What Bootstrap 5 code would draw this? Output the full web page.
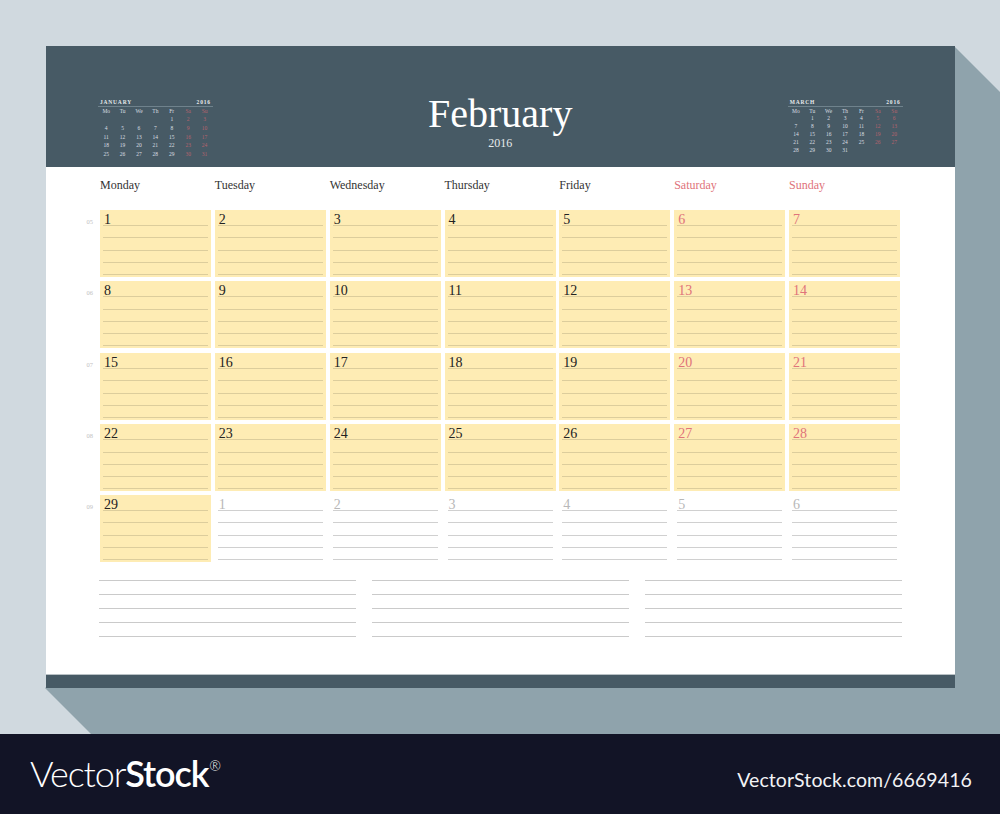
<!DOCTYPE html>
<html lang="en">
<head>
<meta charset="utf-8">
<title>February 2016 calendar</title>
<link rel="stylesheet" href="https://cdn.jsdelivr.net/npm/bootstrap@5.3.0/dist/css/bootstrap.min.css">
<style>
html,body{margin:0;height:814px;overflow:hidden;background:#d0d9df;}
body{font-family:"Liberation Serif",serif;color:#2b2b2b;}
.stage{position:relative;height:734px;padding-top:46px;padding-left:45.5px;}
.cast{position:absolute;left:0;top:0;}
.sheet{position:relative;width:909px;height:642px;background:#fff;}
.sheet-head{height:121px;background:#475a65;padding:53px 52px 0 52.5px;color:#d9dfe2;}
.title-block{margin-top:-7px;}
.month-name{font-size:40px;line-height:44px;color:#fff;}
.year-name{font-size:12px;line-height:14px;color:#e6eaec;}
.mini{width:114.8px;font-size:5.5px;line-height:8px;}
.mini-top{height:6.5px;line-height:7.5px;padding:0 2px;border-bottom:1px solid #6f828c;font-weight:700;letter-spacing:.8px;color:#e6eaec;box-sizing:content-box;}
.mini-grid{display:grid;grid-template-columns:repeat(7,16.4px);text-align:center;}
.mini-jan{grid-auto-rows:8.7px;}
.mini-mar{grid-auto-rows:7.85px;}
.mini-grid .we{color:#b5636e;}
.sheet-body{height:506.5px;padding:0 0 0 36px;}
.month-grid{display:grid;grid-template-columns:14.7px repeat(7,111px);grid-template-rows:38.7px;column-gap:3.83px;row-gap:4.3px;grid-auto-rows:67px;}
.week-row{grid-column:1/-1;display:grid;grid-template-columns:14.7px repeat(7,111px);column-gap:3.83px;padding-top:11px;font-size:12px;line-height:14px;color:#333;}
.week-row .we{color:#e0737a;}
.wk{font-size:6.5px;color:#c2c2c2;line-height:8px;padding-top:8px;padding-left:5px;}
.day{background:#feecb4;padding:4px 3px 0;font-size:14px;line-height:12px;color:#222;}
.rules{height:61.25px;padding-left:1px;background:repeating-linear-gradient(to bottom,transparent 0,transparent 11.25px,#dccd9c 11.25px,#dccd9c 12.25px);}
.day.we{color:#e0737a;}
.day.off{background:transparent;color:#b8b8b8;}
.day.off .rules{background:repeating-linear-gradient(to bottom,transparent 0,transparent 11.25px,#d0d0d0 11.25px,#d0d0d0 12.25px);}
.notes{margin-top:17.5px;padding-left:17.5px;gap:16.5px;}
.note-col{width:256.5px;height:58px;background:repeating-linear-gradient(to bottom,#cacaca 0,#cacaca 1px,transparent 1px,transparent 14px);}
.sheet-foot{height:14.5px;background:#475a65;border-top:1px solid #b9c1c5;}
.brand-bar{height:80px;background:#121426;color:#fff;padding:0 28px 0 30px;font-family:Lato,sans-serif;}
.logo{font-size:36px;line-height:36px;letter-spacing:-1.1px;white-space:nowrap;margin-top:-2px;}
.logo-light{font-weight:300;}
.logo-bold{font-weight:600;}
.logo-reg{font-size:14px;font-weight:300;vertical-align:16px;letter-spacing:0;line-height:0;margin-left:1px;}
.site{font-size:19.5px;line-height:22px;letter-spacing:.1px;margin-top:12px;color:#f2f3f5;}
</style>
</head>
<body>
<div class="stage">
  <svg class="cast" width="1000" height="734" viewBox="0 0 1000 734" aria-hidden="true"><polygon points="954,46 1000,92 1000,734 91,734 45,688" fill="#8fa3ac"/></svg>
  <div class="sheet">
    <div class="sheet-head d-flex justify-content-between align-items-start">
      <div class="mini">
        <div class="mini-top d-flex justify-content-between"><span>JANUARY</span><span>2016</span></div>
        <div class="mini-grid mini-jan">
          <span>Mo</span><span>Tu</span><span>We</span><span>Th</span><span>Fr</span><span class="we">Sa</span><span class="we">Su</span>
          <span></span><span></span><span></span><span></span><span>1</span><span class="we">2</span><span class="we">3</span>
          <span>4</span><span>5</span><span>6</span><span>7</span><span>8</span><span class="we">9</span><span class="we">10</span>
          <span>11</span><span>12</span><span>13</span><span>14</span><span>15</span><span class="we">16</span><span class="we">17</span>
          <span>18</span><span>19</span><span>20</span><span>21</span><span>22</span><span class="we">23</span><span class="we">24</span>
          <span>25</span><span>26</span><span>27</span><span>28</span><span>29</span><span class="we">30</span><span class="we">31</span>
        </div>
      </div>
      <div class="title-block text-center">
        <div class="month-name">February</div>
        <div class="year-name">2016</div>
      </div>
      <div class="mini">
        <div class="mini-top d-flex justify-content-between"><span>MARCH</span><span>2016</span></div>
        <div class="mini-grid mini-mar">
          <span>Mo</span><span>Tu</span><span>We</span><span>Th</span><span>Fr</span><span class="we">Sa</span><span class="we">Su</span>
          <span></span><span>1</span><span>2</span><span>3</span><span>4</span><span class="we">5</span><span class="we">6</span>
          <span>7</span><span>8</span><span>9</span><span>10</span><span>11</span><span class="we">12</span><span class="we">13</span>
          <span>14</span><span>15</span><span>16</span><span>17</span><span>18</span><span class="we">19</span><span class="we">20</span>
          <span>21</span><span>22</span><span>23</span><span>24</span><span>25</span><span class="we">26</span><span class="we">27</span>
          <span>28</span><span>29</span><span>30</span><span>31</span>
        </div>
      </div>
    </div>
    <div class="sheet-body">
      <div class="month-grid">
        <div class="week-row"><span></span><span>Monday</span><span>Tuesday</span><span>Wednesday</span><span>Thursday</span><span>Friday</span><span class="we">Saturday</span><span class="we">Sunday</span></div>

        <div class="wk">05</div>
        <div class="day"><div class="rules">1</div></div><div class="day"><div class="rules">2</div></div><div class="day"><div class="rules">3</div></div><div class="day"><div class="rules">4</div></div><div class="day"><div class="rules">5</div></div><div class="day we"><div class="rules">6</div></div><div class="day we"><div class="rules">7</div></div>

        <div class="wk">06</div>
        <div class="day"><div class="rules">8</div></div><div class="day"><div class="rules">9</div></div><div class="day"><div class="rules">10</div></div><div class="day"><div class="rules">11</div></div><div class="day"><div class="rules">12</div></div><div class="day we"><div class="rules">13</div></div><div class="day we"><div class="rules">14</div></div>

        <div class="wk">07</div>
        <div class="day"><div class="rules">15</div></div><div class="day"><div class="rules">16</div></div><div class="day"><div class="rules">17</div></div><div class="day"><div class="rules">18</div></div><div class="day"><div class="rules">19</div></div><div class="day we"><div class="rules">20</div></div><div class="day we"><div class="rules">21</div></div>

        <div class="wk">08</div>
        <div class="day"><div class="rules">22</div></div><div class="day"><div class="rules">23</div></div><div class="day"><div class="rules">24</div></div><div class="day"><div class="rules">25</div></div><div class="day"><div class="rules">26</div></div><div class="day we"><div class="rules">27</div></div><div class="day we"><div class="rules">28</div></div>

        <div class="wk">09</div>
        <div class="day"><div class="rules">29</div></div><div class="day off"><div class="rules">1</div></div><div class="day off"><div class="rules">2</div></div><div class="day off"><div class="rules">3</div></div><div class="day off"><div class="rules">4</div></div><div class="day off"><div class="rules">5</div></div><div class="day off"><div class="rules">6</div></div>
      </div>
      <div class="notes d-flex">
        <div class="note-col"></div><div class="note-col"></div><div class="note-col"></div>
      </div>
    </div>
    <div class="sheet-foot"></div>
  </div>
</div>
<div class="brand-bar d-flex justify-content-between align-items-center">
  <div class="logo"><span class="logo-light">Vector</span><span class="logo-bold">Stock</span><span class="logo-reg">®</span></div>
  <div class="site">VectorStock.com/6669416</div>
</div>
</body>
</html>
